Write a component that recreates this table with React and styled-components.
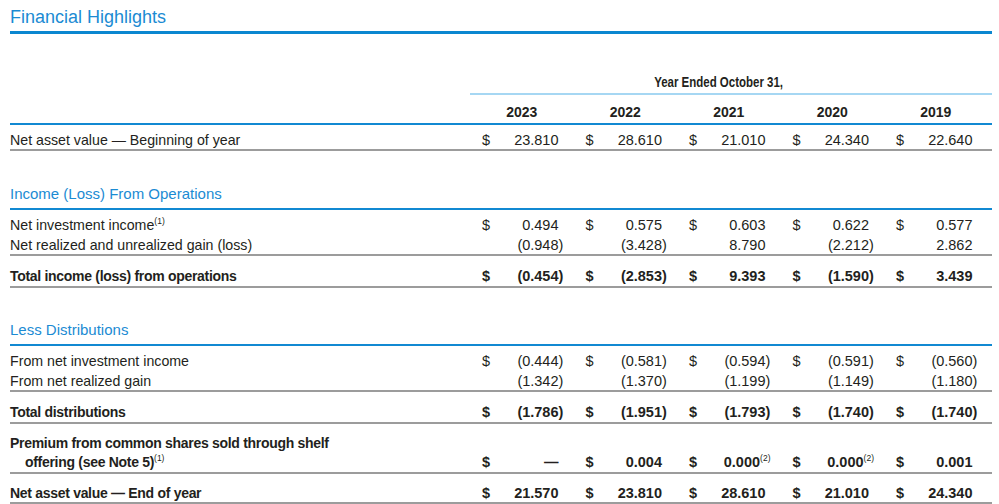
import React from 'react';
import styled, { createGlobalStyle } from 'styled-components';

const years = ['2023', '2022', '2021', '2020', '2019'];

const sections = [
    {
        heading: 'Income (Loss) From Operations',
        rows: [
            { label: 'Net investment income', note: '1', dollar: true, values: ['0.494', '0.575', '0.603', '0.622', '0.577'] },
            { label: 'Net realized and unrealized gain (loss)', values: ['(0.948)', '(3.428)', '8.790', '(2.212)', '2.862'], rule: true },
        ],
        total: { label: 'Total income (loss) from operations', values: ['(0.454)', '(2.853)', '9.393', '(1.590)', '3.439'] },
    },
    {
        heading: 'Less Distributions',
        rows: [
            { label: 'From net investment income', dollar: true, values: ['(0.444)', '(0.581)', '(0.594)', '(0.591)', '(0.560)'] },
            { label: 'From net realized gain', values: ['(1.342)', '(1.370)', '(1.199)', '(1.149)', '(1.180)'], rule: true },
        ],
        total: { label: 'Total distributions', values: ['(1.786)', '(1.951)', '(1.793)', '(1.740)', '(1.740)'] },
    },
];

// splits "(0.444)" so the closing paren can hang past the digits
function splitValue(v) {
    if (typeof v === 'object') return { figure: v.v, tail: <Sup>({v.note})</Sup> };
    if (v.endsWith(')')) return { figure: v.slice(0, -1), tail: ')' };
    return { figure: v, tail: '' };
}

function Amounts({ values, dollar, bold }) {
    return values.map((v, i) => {
        const { figure, tail } = splitValue(v);
        return (
            <Amount key={i} $bold={bold}>
                <Dollar>{dollar ? '$' : ''}</Dollar>
                <Figure>{figure}</Figure>
                <Hang>{tail}</Hang>
            </Amount>
        );
    });
}

function App() {
    return (
        <>
            <GlobalStyle />
            <Page>
                <Title>Financial Highlights</Title>

                <Row $h={61}>
                    <YearEnded>
                        <Condensed>Year Ended October 31,</Condensed>
                    </YearEnded>
                </Row>
                <Row $h={30} $rule="blue">
                    <span />
                    {years.map((y) => (
                        <Year key={y}>{y}</Year>
                    ))}
                </Row>

                <Row $pt={5} $h={26} $rule="gray">
                    <Label>Net asset value — Beginning of year</Label>
                    <Amounts dollar values={['23.810', '28.610', '21.010', '24.340', '22.640']} />
                </Row>

                {sections.map((s, si) => (
                    <React.Fragment key={s.heading}>
                        <Row $h={si === 0 ? 59 : 58} $rule="blue">
                            <Heading>{s.heading}</Heading>
                        </Row>
                        {s.rows.map((r, i) => (
                            <Row key={r.label} $pt={i === 0 ? 5 : 0} $h={i === 0 ? 25 : 21} $rule={r.rule ? 'gray' : null}>
                                <Label>
                                    {r.label}
                                    {r.note && <Sup>({r.note})</Sup>}
                                </Label>
                                <Amounts dollar={r.dollar} values={r.values} />
                            </Row>
                        ))}
                        <Row $pt={10} $h={32} $rule="gray" $bold>
                            <Label $bold>{s.total.label}</Label>
                            <Amounts dollar bold values={s.total.values} />
                        </Row>
                    </React.Fragment>
                ))}

                <Row $pt={10} $h={50} $rule="gray" $bold>
                    <Label $bold $lh={19}>
                        Premium from common shares sold through shelf
                        <Indent>
                            offering (see Note 5)<Sup>(1)</Sup>
                        </Indent>
                    </Label>
                    <Amounts dollar bold values={['—', '0.004', { v: '0.000', note: '2' }, { v: '0.000', note: '2' }, '0.001']} />
                </Row>

                <Row $pt={9} $h={30} $rule="gray" $bold>
                    <Label $bold>Net asset value — End of year</Label>
                    <Amounts dollar bold values={['21.570', '23.810', '28.610', '21.010', '24.340']} />
                </Row>
            </Page>
        </>
    );
}

export default App;

const GlobalStyle = createGlobalStyle`
    body {
        margin: 0;
        background: #fff;
        font-family: "Liberation Sans", Arial, sans-serif;
        color: #231f20;
        overflow: hidden;
    }
`;

const Page = styled.div`
    width: 982px;
    padding-left: 10px;
`;

const Title = styled.div`
    padding-top: 6px;
    height: 25px;
    line-height: 22px;
    font-size: 18px;
    color: #1b8bd3;
    border-bottom: 3px solid #0b87d0;
`;

const Row = styled.div`
    display: grid;
    grid-template-columns: 460px repeat(5, 103.5px) 1fr;
    align-items: end;
    box-sizing: border-box;
    height: ${(p) => p.$h}px;
    padding-top: ${(p) => p.$pt || 0}px;
    font-size: 14.5px;
    line-height: 20px;
    font-weight: ${(p) => (p.$bold ? 700 : 400)};
    border-bottom: ${(p) =>
        p.$rule === 'blue' ? '2px solid #1189d2' : p.$rule === 'gray' ? '2px solid #9c9c9c' : 'none'};
`;

const YearEnded = styled.div`
    grid-column: 2 / -1;
    padding: 0 24px 3px 0;
    text-align: center;
    font-weight: 700;
    font-size: 14px;
    line-height: 16px;
    border-bottom: 2px solid #a6d7f3;
`;

/* no condensed face installed, so squeeze the bold one */
const Condensed = styled.span`
    display: inline-block;
    transform: scaleX(0.82);
`;

const Year = styled.div`
    padding-bottom: 3px;
    text-align: center;
    font-weight: 700;
    font-size: 14px;
    line-height: 16px;
`;

const Heading = styled.div`
    padding-bottom: 5px;
    font-size: 15px;
    line-height: 18px;
    color: #1b8bd3;
`;

const Label = styled.div`
    font-size: ${(p) => (p.$bold ? 14 : 14.2)}px;
    letter-spacing: ${(p) => (p.$bold ? '-0.3px' : 'normal')};
    line-height: ${(p) => p.$lh || 20}px;
`;

const Indent = styled.div`
    padding-left: 15px;
`;

const Sup = styled.sup`
    font-size: 8.5px;
    line-height: 0;
    letter-spacing: 0;
    vertical-align: 6px;
    font-weight: 400;
`;

const Amount = styled.div`
    display: flex;
    align-items: baseline;
    padding: 0 10px 0 12px;
    font-weight: ${(p) => (p.$bold ? 700 : 400)};
`;

const Dollar = styled.span`
    width: 10px;
`;

const Figure = styled.span`
    margin-left: auto;
    white-space: nowrap;
`;

const Hang = styled.span`
    min-width: 5px;
    white-space: nowrap;
`;
